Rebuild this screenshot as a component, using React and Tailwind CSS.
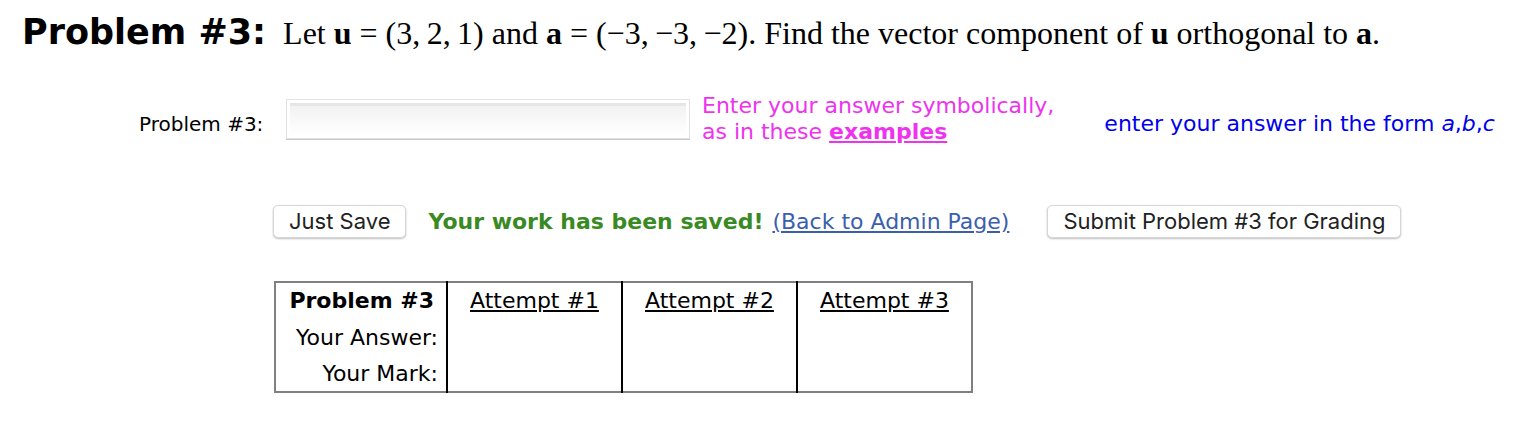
import React from "react";

const VERDANA = { fontFamily: '"DejaVu Sans", Verdana, sans-serif' };

function ProblemStatement() {
  return (
    <div className="flex items-baseline pl-[22px] pt-[6px]">
      <h1 className="text-[35px] font-bold text-black" style={VERDANA}>
        Problem #3:
      </h1>
      <p
        className="ml-[17px] text-[32px] text-black"
        style={{ fontFamily: '"Liberation Serif", "Times New Roman", serif' }}
      >
        Let <b>u</b> = (3,&thinsp;2,&thinsp;1) and <b>a</b> = (−3,&thinsp;−3,&thinsp;−2). Find the vector
        component of <b>u</b> orthogonal to <b>a</b>.
      </p>
    </div>
  );
}

function AnswerRow() {
  return (
    <div className="mt-[34px] flex items-center" style={VERDANA}>
      <label className="ml-[139px] mt-[10px] w-[124px] whitespace-nowrap text-[20px] text-black">
        Problem #3:
      </label>
      <div className="ml-[23px] h-[40px] w-[404px] border border-[#e2e2e2] bg-white p-[3px] shadow-[0_1px_0_#c8c8c8]">
        <div className="h-full w-full border-t-[3px] border-[#e6e6e6] bg-gradient-to-b from-[#f2f2f2] to-white" />
      </div>
      <div className="ml-[12px] whitespace-nowrap text-[22px] leading-[26px] text-[#ee33ee]">
        <div>Enter your answer symbolically,</div>
        <div>
          as in these{" "}
          <a href="#" className="font-bold underline">
            examples
          </a>
        </div>
      </div>
      <div className="ml-[50px] mt-[10px] whitespace-nowrap text-[22px] text-[#0000ee]">
        enter your answer in the form <i>a</i>,<i>b</i>,<i>c</i>
      </div>
    </div>
  );
}

function Btn({ children }) {
  return (
    <button
      className="h-[33px] whitespace-nowrap rounded-[5px] border border-[#d6d6d6] bg-white px-[15px] text-[22px] leading-none text-[#222] shadow-[0_1px_2px_rgba(0,0,0,0.25)]"
      style={{ fontFamily: "Inter, Roboto, sans-serif" }}
    >
      {children}
    </button>
  );
}

function ActionRow() {
  return (
    <div className="mt-[60px] flex items-center pl-[273px] whitespace-nowrap" style={VERDANA}>
      <Btn>Just Save</Btn>
      <span className="ml-[22px] text-[22px] font-bold text-[#3a8a24]">Your work has been saved!</span>
      <a href="#" className="ml-[9px] text-[22px] text-[#3b5fad] underline">
        (Back to Admin Page)
      </a>
      <div className="ml-[38px]">
        <Btn>Submit Problem #3 for Grading</Btn>
      </div>
    </div>
  );
}

function AttemptsTable() {
  const attempts = ["Attempt #1", "Attempt #2", "Attempt #3"];
  return (
    <div className="mt-[43px] pl-[274px]" style={VERDANA}>
      <table className="table-fixed border-collapse border-2 border-[#808080] text-[22px] text-black">
        <tbody>
          <tr className="h-[37px]">
            <th className="w-[172px] whitespace-nowrap border-r-2 border-black pr-[12px] text-right font-bold">
              Problem #3
            </th>
            {attempts.map((a, i) => (
              <td
                key={a}
                className={`w-[175px] whitespace-nowrap pl-[22px] align-middle ${i < 2 ? "border-r-2 border-black" : ""}`}
              >
                <span className="underline">{a}</span>
              </td>
            ))}
          </tr>
          <tr className="h-[38px]">
            <td className="whitespace-nowrap border-r-2 border-black pr-[8px] text-right">Your Answer:</td>
            <td className="border-r-2 border-black" />
            <td className="border-r-2 border-black" />
            <td />
          </tr>
          <tr className="h-[35px]">
            <td className="whitespace-nowrap border-r-2 border-black pr-[8px] text-right">Your Mark:</td>
            <td className="border-r-2 border-black" />
            <td className="border-r-2 border-black" />
            <td />
          </tr>
        </tbody>
      </table>
    </div>
  );
}

export default function App() {
  return (
    <div className="h-[430px] w-[1524px] bg-white">
      <ProblemStatement />
      <AnswerRow />
      <ActionRow />
      <AttemptsTable />
    </div>
  );
}
